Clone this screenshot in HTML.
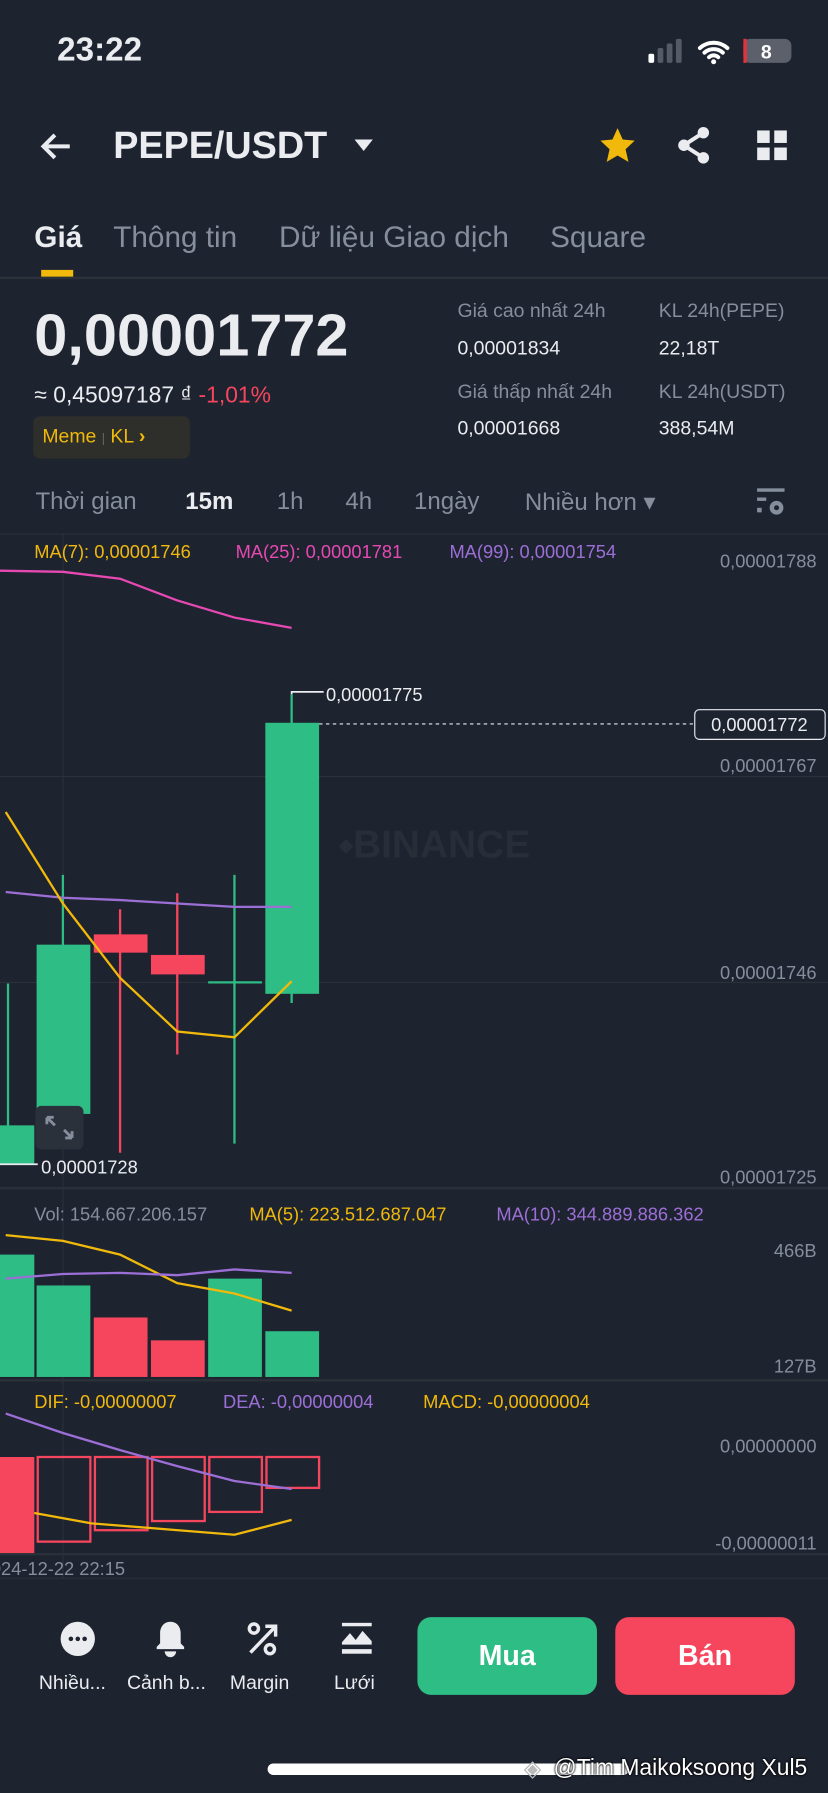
<!DOCTYPE html>
<html><head><meta charset="utf-8"><style>
html,body{margin:0;padding:0;background:#1e2330;overflow:hidden}
#w{width:724px;height:1568px;position:relative;transform:scale(1.14365);transform-origin:0 0;background:#1e2330;font-family:"Liberation Sans","DejaVu Sans",sans-serif;color:#eaecef}
.a{position:absolute;white-space:nowrap}
.g{color:#848e9c}
</style></head><body><div id="w">
<div class="a" style="left:50px;top:28px;font-size:29px;font-weight:bold">23:22</div>
<svg class="a" style="left:565px;top:32px" width="130" height="26">
<rect x="2" y="15" width="5" height="8" rx="1.5" fill="#fff"/><rect x="10" y="10" width="5" height="13" rx="1.5" fill="#555b66"/><rect x="18" y="6" width="5" height="17" rx="1.5" fill="#555b66"/><rect x="26" y="2" width="5" height="21" rx="1.5" fill="#555b66"/>
<path d="M47 10a18 18 0 0 1 24 0M51 14a12 12 0 0 1 16 0M55 18a6 6 0 0 1 8 0" stroke="#fff" stroke-width="3.5" fill="none" stroke-linecap="round"/><circle cx="59" cy="22" r="2.2" fill="#fff"/>
<rect x="85" y="2" width="42" height="21" rx="6" fill="#5b606b"/><rect x="85" y="2" width="3" height="21" fill="#e5323c"/>
<text x="105" y="19" font-size="17" font-weight="bold" fill="#fff" text-anchor="middle" font-family="Liberation Sans">8</text></svg>
<svg class="a" style="left:33px;top:114px" width="32" height="28"><path d="M28 14H5M15 4L5 14l10 10" stroke="#eaecef" stroke-width="3.5" fill="none"/></svg>
<div class="a" style="left:99px;top:108px;font-size:33px;font-weight:bold">PEPE/USDT</div>
<svg class="a" style="left:309px;top:121px" width="18" height="12"><path d="M1 1h16L9 11z" fill="#eaecef"/></svg>
<svg class="a" style="left:523px;top:110px" width="34" height="34"><path d="M17 2l4.5 10 10.5 1-8 7.5 2.5 11L17 26l-9.5 5.5 2.5-11-8-7.5 10.5-1z" fill="#f0b90b"/></svg>
<svg class="a" style="left:591px;top:110px" width="32" height="34"><circle cx="24" cy="6" r="5" fill="#eaecef"/><circle cx="7" cy="17" r="5" fill="#eaecef"/><circle cx="24" cy="28" r="5" fill="#eaecef"/><path d="M24 6L7 17l17 11" stroke="#eaecef" stroke-width="3.5" fill="none"/></svg>
<svg class="a" style="left:662px;top:114px" width="28" height="28"><rect x="0" y="0" width="11" height="11" fill="#eaecef"/><rect x="15" y="0" width="11" height="11" fill="#eaecef"/><rect x="0" y="15" width="11" height="11" fill="#eaecef"/><rect x="15" y="15" width="11" height="11" fill="#eaecef"/></svg>
<div class="a" style="left:30px;top:192px;font-size:26px;font-weight:bold">Giá</div>
<div class="a g" style="left:99px;top:192px;font-size:26px">Thông tin</div>
<div class="a g" style="left:244px;top:192px;font-size:26px">Dữ liệu Giao dịch</div>
<div class="a g" style="left:481px;top:192px;font-size:26px">Square</div>
<div class="a" style="left:36px;top:236px;width:28px;height:6px;background:#f0b90b"></div>
<div class="a" style="left:0;top:242px;width:724px;height:2px;background:#2b3139"></div>
<div class="a" style="left:30px;top:264px;font-size:52px;font-weight:bold">0,00001772</div>
<div class="a" style="left:30px;top:335px;font-size:20px">≈ 0,45097187 ₫ <span style="color:#f6465d">-1,01%</span></div>
<div class="a" style="left:29px;top:364px;width:137px;height:37px;border-radius:6px;background:#2e2e2a"></div>
<div class="a" style="left:37px;top:372px;font-size:17px;color:#f0b90b">Meme <span style="color:#666;font-size:11px">|</span> KL <b>›</b></div>
<div class="a g" style="left:400px;top:262px;font-size:17px">Giá cao nhất 24h</div>
<div class="a" style="left:400px;top:295px;font-size:17px">0,00001834</div>
<div class="a g" style="left:400px;top:333px;font-size:17px">Giá thấp nhất 24h</div>
<div class="a" style="left:400px;top:365px;font-size:17px">0,00001668</div>
<div class="a g" style="left:576px;top:262px;font-size:17px">KL 24h(PEPE)</div>
<div class="a" style="left:576px;top:295px;font-size:17px">22,18T</div>
<div class="a g" style="left:576px;top:333px;font-size:17px">KL 24h(USDT)</div>
<div class="a" style="left:576px;top:365px;font-size:17px">388,54M</div>
<div class="a g" style="left:31px;top:427px;font-size:21px">Thời gian</div>
<div class="a" style="left:162px;top:427px;font-size:21px;font-weight:bold">15m</div>
<div class="a g" style="left:242px;top:427px;font-size:21px">1h</div>
<div class="a g" style="left:302px;top:427px;font-size:21px">4h</div>
<div class="a g" style="left:362px;top:427px;font-size:21px">1ngày</div>
<div class="a g" style="left:459px;top:427px;font-size:21px">Nhiều hơn ▾</div>
<svg class="a" style="left:660px;top:426px" width="28" height="28"><rect x="2" y="1" width="24" height="3" fill="#848e9c"/><rect x="2" y="9" width="8" height="3" fill="#848e9c"/><rect x="2" y="18" width="4" height="4" fill="#848e9c"/><circle cx="19" cy="18" r="6" fill="#848e9c"/><circle cx="19" cy="18" r="2.2" fill="#1e2330"/></svg>
<svg class="a" style="left:0;top:460px" width="724" height="960" font-family="Liberation Sans" font-size="16">
<g transform="translate(0,-460)">
<line x1="0" y1="467" x2="724" y2="467" stroke="#2b3139"/>
<line x1="0" y1="679" x2="724" y2="679" stroke="#2b3139"/>
<line x1="0" y1="859" x2="724" y2="859" stroke="#2b3139"/>
<line x1="0" y1="1039" x2="724" y2="1039" stroke="#2b3139" stroke-width="2"/>
<line x1="0" y1="1207" x2="724" y2="1207" stroke="#2b3139" stroke-width="2"/>
<line x1="0" y1="1359" x2="724" y2="1359" stroke="#2b3139" stroke-width="2"/>
<line x1="0" y1="1380" x2="724" y2="1380" stroke="#2b3139"/>
<line x1="55" y1="467" x2="55" y2="1380" stroke="#2b3139"/>
<text x="30" y="488" fill="#f0b90b">MA(7): 0,00001746</text>
<text x="206" y="488" fill="#e649b2">MA(25): 0,00001781</text>
<text x="393" y="488" fill="#9c6fd6">MA(99): 0,00001754</text>
<g fill="#848e9c" text-anchor="end"><text x="714" y="496">0,00001788</text><text x="714" y="675">0,00001767</text><text x="714" y="856">0,00001746</text><text x="714" y="1035">0,00001725</text></g>
<text x="380" y="750" font-size="34" font-weight="bold" fill="#282e38" text-anchor="middle">⬩BINANCE</text>
<g stroke="#2ebd85" stroke-width="2"><line x1="7" y1="860" x2="7" y2="985"/><line x1="55" y1="765" x2="55" y2="985"/><line x1="205" y1="765" x2="205" y2="1000"/><line x1="255" y1="607" x2="255" y2="877"/><line x1="182" y1="859" x2="229" y2="859"/></g>
<g stroke="#f6465d" stroke-width="2"><line x1="105" y1="795" x2="105" y2="1008"/><line x1="155" y1="781" x2="155" y2="922"/></g>
<rect x="0" y="984" width="30" height="34" fill="#2ebd85"/>
<rect x="32" y="826" width="47" height="148" fill="#2ebd85"/>
<rect x="82" y="817" width="47" height="16" fill="#f6465d"/>
<rect x="132" y="835" width="47" height="17" fill="#f6465d"/>
<rect x="232" y="632" width="47" height="237" fill="#2ebd85"/>
<polyline points="0,499 55,500 105,506 155,525 205,540 255,549" fill="none" stroke="#e649b2" stroke-width="2"/>
<polyline points="5,780 55,785 105,787 155,790 205,793 255,793" fill="none" stroke="#9c6fd6" stroke-width="2"/>
<polyline points="5,710 55,790 105,855 155,902 205,907 255,858" fill="none" stroke="#f0b90b" stroke-width="2"/>
<polyline points="255,607 255,605 283,605" fill="none" stroke="#eaecef" stroke-width="1.5"/>
<text x="285" y="613" fill="#eaecef">0,00001775</text>
<line x1="279" y1="633" x2="607" y2="633" stroke="#eaecef" stroke-dasharray="3,3"/>
<rect x="607.5" y="620.5" width="114" height="26" rx="4" fill="#1e2330" stroke="#eaecef"/>
<text x="664" y="639" fill="#eaecef" text-anchor="middle">0,00001772</text>
<line x1="0" y1="1018" x2="33" y2="1018" stroke="#eaecef" stroke-width="1.5"/>
<text x="36" y="1026" fill="#eaecef">0,00001728</text>
<rect x="31" y="967" width="42" height="38" rx="5" fill="#2b313b"/>
<path d="M41 977l7 7M41 977h6M41 977v6M63 995l-7-7M63 995h-6M63 995v-6" stroke="#848e9c" stroke-width="2.5" fill="none"/>
<text x="30" y="1067" fill="#848e9c">Vol: 154.667.206.157</text>
<text x="218" y="1067" fill="#f0b90b">MA(5): 223.512.687.047</text>
<text x="434" y="1067" fill="#9c6fd6">MA(10): 344.889.886.362</text>
<text x="714" y="1099" fill="#848e9c" text-anchor="end">466B</text>
<text x="714" y="1200" fill="#848e9c" text-anchor="end">127B</text>
<rect x="0" y="1097" width="30" height="107" fill="#2ebd85"/>
<rect x="32" y="1124" width="47" height="80" fill="#2ebd85"/>
<rect x="82" y="1152" width="47" height="52" fill="#f6465d"/>
<rect x="132" y="1172" width="47" height="32" fill="#f6465d"/>
<rect x="182" y="1118" width="47" height="86" fill="#2ebd85"/>
<rect x="232" y="1164" width="47" height="40" fill="#2ebd85"/>
<polyline points="5,1080 55,1085 105,1097 155,1122 205,1131 255,1146" fill="none" stroke="#f0b90b" stroke-width="2"/>
<polyline points="5,1118 55,1114 105,1113 155,1115 205,1110 255,1113" fill="none" stroke="#9c6fd6" stroke-width="2"/>
<text x="30" y="1231" fill="#f0b90b">DIF: -0,00000007</text>
<text x="195" y="1231" fill="#9c6fd6">DEA: -0,00000004</text>
<text x="370" y="1231" fill="#f0b90b">MACD: -0,00000004</text>
<text x="714" y="1270" fill="#848e9c" text-anchor="end">0,00000000</text>
<text x="714" y="1355" fill="#848e9c" text-anchor="end">-0,00000011</text>
<rect x="0" y="1274" width="30" height="84" fill="#f6465d"/>
<g fill="none" stroke="#f6465d" stroke-width="2"><rect x="33" y="1274" width="46" height="74"/><rect x="83" y="1274" width="46" height="64"/><rect x="133" y="1274" width="46" height="56"/><rect x="183" y="1274" width="46" height="48"/><rect x="233" y="1274" width="46" height="27"/></g>
<polyline points="30,1323 80,1332 130,1336 205,1342 255,1329" fill="none" stroke="#f0b90b" stroke-width="2"/>
<polyline points="5,1236 55,1253 105,1268 155,1282 205,1295 255,1302" fill="none" stroke="#9c6fd6" stroke-width="2"/>
<text x="-8" y="1377" fill="#848e9c">024-12-22 22:15</text>
</g></svg>
<svg class="a" style="left:52px;top:1417px" width="32" height="32"><circle cx="16" cy="16" r="15" fill="#eaecef"/><circle cx="10" cy="16" r="2" fill="#1e2330"/><circle cx="16" cy="16" r="2" fill="#1e2330"/><circle cx="22" cy="16" r="2" fill="#1e2330"/></svg>
<svg class="a" style="left:134px;top:1416px" width="30" height="34"><path d="M15 2c-6 0-9 5-9 10v9l-3 3v2h24v-2l-3-3v-9c0-5-3-10-9-10z" fill="#eaecef"/><path d="M10 28h10a5 5 0 0 1-10 0z" fill="#eaecef"/></svg>
<svg class="a" style="left:215px;top:1418px" width="30" height="30"><circle cx="7" cy="6" r="4" fill="none" stroke="#eaecef" stroke-width="3"/><circle cx="21" cy="24" r="4" fill="none" stroke="#eaecef" stroke-width="3"/><path d="M4 27L26 4M17 4h9v9" stroke="#eaecef" stroke-width="3" fill="none"/></svg>
<svg class="a" style="left:297px;top:1418px" width="30" height="30"><rect x="2" y="1" width="26" height="3" fill="#eaecef"/><path d="M2 18l7-8 5 6 6-8 8 9v3H2z" fill="#eaecef"/><rect x="2" y="24" width="26" height="4" fill="#eaecef"/></svg>
<div class="a" style="left:34px;top:1462px;font-size:17px">Nhiều...</div>
<div class="a" style="left:111px;top:1462px;font-size:17px">Cảnh b...</div>
<div class="a" style="left:201px;top:1462px;font-size:17px">Margin</div>
<div class="a" style="left:292px;top:1462px;font-size:17px">Lưới</div>
<div class="a" style="left:365px;top:1414px;width:157px;height:68px;border-radius:12px;background:#2ebd85;color:#fff;font-size:25px;font-weight:bold;text-align:center;line-height:68px">Mua</div>
<div class="a" style="left:538px;top:1414px;width:157px;height:68px;border-radius:12px;background:#f6465d;color:#fff;font-size:25px;font-weight:bold;text-align:center;line-height:68px">Bán</div>
<div class="a" style="left:234px;top:1542px;width:316px;height:10px;border-radius:5px;background:#fff"></div>
<div class="a" style="left:484px;top:1535px;font-size:20px;color:#fff;text-shadow:0 0 2px #000,0 0 2px #000">@Tim Maikoksoong Xul5</div>
<div class="a" style="left:458px;top:1534px;font-size:20px;color:#bbb">◈</div>
</div></body></html>
